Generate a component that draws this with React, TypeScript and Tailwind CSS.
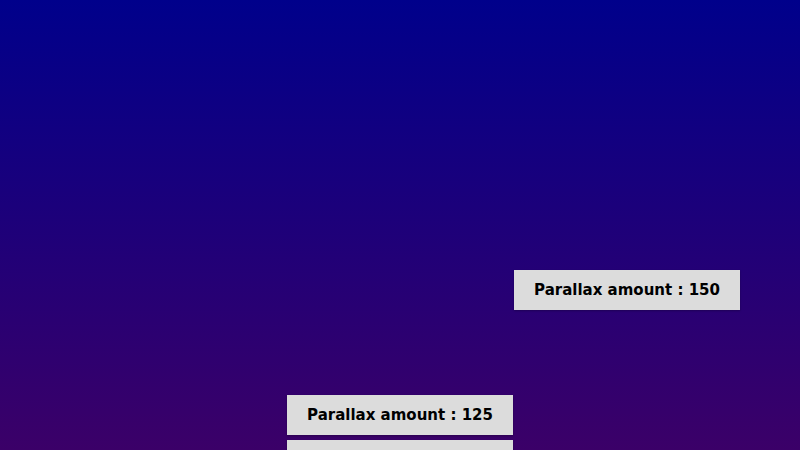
const boxClass =
  'w-[226px] h-[40px] shrink-0 bg-[#dcdcdc] flex items-center justify-center text-[15px] font-bold text-black shadow-[0_1px_2px_rgba(0,0,0,0.25)]';

export default function App() {
  return (
    <div
      className="h-[450px] w-full overflow-hidden bg-linear-to-b/srgb from-[#00008b] to-[#3b0068]"
      style={{ fontFamily: '"DejaVu Sans", sans-serif' }}
    >
      <div className="flex flex-col items-center pt-[270px]">
        {/* layer shifted by its parallax offset */}
        <div className={`${boxClass} translate-x-[227px]`}>Parallax amount : 150</div>
        <div className={`${boxClass} mt-[85px]`}>Parallax amount : 125</div>
        <div className={`${boxClass} mt-[5px]`}>Parallax amount : 100</div>
      </div>
    </div>
  );
}
